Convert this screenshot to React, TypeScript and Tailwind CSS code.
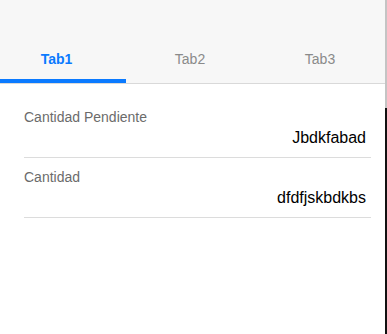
export default function App() {
  const font = { fontFamily: '"Liberation Sans", Arial, sans-serif' };
  return (
    <div className="flex w-[387px] h-[334px] bg-white" style={font}>
      <div className="w-[385px] h-full bg-white flex flex-col">
        <div className="bg-[#f7f7f7] flex flex-col border-b border-[#d9d9d9]">
          <div className="h-[40px]" />
          <div className="flex h-[39px] items-center text-[14px]">
            <div className="w-[113px] text-center font-bold text-[#0a7aff]">Tab1</div>
            <div className="w-[154px] text-center text-[#8a8a8a]">Tab2</div>
            <div className="w-[106px] text-center text-[#8a8a8a]">Tab3</div>
          </div>
          <div className="h-[4px] flex">
            <div className="w-[126px] h-full bg-[#0a7aff]" />
          </div>
        </div>
        <div className="pt-[14px] flex flex-col">
          {[
            ["Cantidad Pendiente", "Jbdkfabad"],
            ["Cantidad", "dfdfjskbdkbs"],
          ].map(([label, value]) => (
            <div
              key={label}
              className="ml-[24px] mr-[14px] pt-[11px] pb-[9px] border-b border-[#dcdcdc] flex flex-col"
            >
              <div className="text-[14px] leading-[16px] text-[#6b6b6b]">{label}</div>
              <div className="mt-[3px] text-[16px] leading-[20px] text-black text-right pr-[5px]">{value}</div>
            </div>
          ))}
        </div>
      </div>
      <div className="w-[2px] h-full flex flex-col">
        <div className="h-[108px] bg-[#c4c4c4]" />
        <div className="flex-1 bg-[#111111]" />
      </div>
    </div>
  );
}
